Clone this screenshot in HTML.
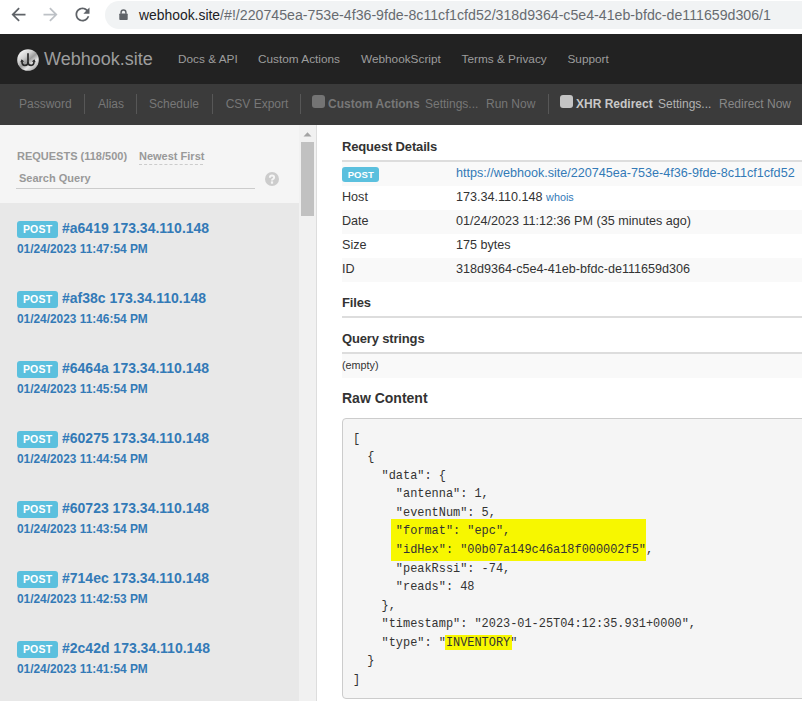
<!DOCTYPE html>
<html><head><meta charset="utf-8">
<style>
*{box-sizing:border-box;margin:0;padding:0}
html,body{width:802px;height:701px;overflow:hidden;background:#fff;font-family:"Liberation Sans",sans-serif;position:relative}
.a{position:absolute;white-space:pre;line-height:1}
#chrome{position:absolute;left:0;top:0;width:802px;height:34px;background:#fff}
#pill{position:absolute;left:105px;top:1px;width:720px;height:28px;border-radius:14px;background:#f1f3f4}
#nav{position:absolute;left:0;top:34px;width:802px;height:50px;background:#222}
#sub{position:absolute;left:0;top:84px;width:802px;height:41px;background:#3b3b3b}
.nv{color:#9d9d9d;font-size:11.8px}
.sb{color:#777;font-size:12px}
.sep{position:absolute;top:94px;width:1px;height:20px;background:#575757}
.cb{position:absolute;width:13px;height:13px;border-radius:2px}
#left{position:absolute;left:0;top:125px;width:299px;height:576px;background:#e8e8e8}
#lefttop{position:absolute;left:0;top:125px;width:299px;height:78px;background:#f5f5f5}
#track{position:absolute;left:299px;top:125px;width:17px;height:576px;background:#f1f1f1}
#trackb{position:absolute;left:316px;top:125px;width:1px;height:576px;background:#ddd}
#thumb{position:absolute;left:301px;top:142px;width:13px;height:74px;background:#c1c1c1}
.lh{color:#999;font-weight:bold;font-size:11px}
.badge{position:absolute;background:#5bc0de;color:#fff;font-weight:bold;border-radius:3px;text-align:center}
.it{color:#337ab7;font-weight:bold}
.row{position:absolute;left:342px;width:460px;height:24px}
.alt{background:#f9f9f9}
.td{color:#333;font-size:12.6px}
.hd{color:#333;font-weight:bold;font-size:13px;letter-spacing:-0.16px}
.bord{position:absolute;left:342px;width:460px;height:2px;background:#ddd}
#code{position:absolute;left:342px;top:418px;width:480px;height:281px;background:#f5f5f5;border:1px solid #ccc;border-radius:4px}
#pre{position:absolute;left:353px;top:429.6px;font-family:"Liberation Mono",monospace;font-size:11.92px;line-height:18.57px;color:#333;white-space:pre}
.hl{position:absolute;background:#f7f700}
</style></head><body>
<div id="chrome"></div>
<!-- back arrow -->
<svg class="a" style="left:7.6px;top:4.1px" width="21" height="21" viewBox="0 0 24 24"><path d="M20 11H7.83l5.59-5.59L12 4l-8 8 8 8 1.41-1.41L7.83 13H20v-2z" fill="#5f6368"/></svg>
<svg class="a" style="left:40.1px;top:4.1px" width="21" height="21" viewBox="0 0 24 24"><path d="M12 4l-1.41 1.41L16.17 11H4v2h12.17l-5.58 5.59L12 20l8-8z" fill="#bdc1c6"/></svg>
<svg class="a" style="left:72.2px;top:4.2px" width="21" height="21" viewBox="0 0 24 24"><path d="M17.65 6.35C16.2 4.9 14.21 4 12 4c-4.42 0-7.99 3.58-7.99 8s3.57 8 7.99 8c3.730 0 6.84-2.55 7.73-6h-2.080c-.82 2.33-3.04 4-5.65 4-3.31 0-6-2.69-6-6s2.69-6 6-6c1.66 0 3.14.69 4.22 1.78L13 11h7V4l-2.35 2.35z" fill="#5f6368"/></svg>
<div id="pill"></div>
<svg class="a" style="left:118.5px;top:9px" width="9" height="11" viewBox="0 0 9 11"><path d="M2.1 4.8V3.3a2.4 2.4 0 0 1 4.8 0v1.5" fill="none" stroke="#5f6368" stroke-width="1.5"/><rect x="0.3" y="4.5" width="8.4" height="6.5" rx="0.8" fill="#5f6368"/></svg>
<div class="a" style="left:139px;top:7.8px;font-size:13.9px;color:#202124">webhook.site<span style="color:#676b70;font-size:14.18px">/#!/220745ea-753e-4f36-9fde-8c11cf1cfd52/318d9364-c5e4-41eb-bfdc-de111659d306/1</span></div>

<div id="nav"></div>
<svg class="a" style="left:17px;top:49px" width="22" height="22" viewBox="0 0 22 22">
<defs><linearGradient id="g1" x1="0.15" y1="0.1" x2="0.85" y2="0.95"><stop offset="0" stop-color="#f4f4f4"/><stop offset="0.3" stop-color="#d0d0d0"/><stop offset="0.5" stop-color="#9c9c9c"/><stop offset="0.72" stop-color="#e6e6e6"/><stop offset="1" stop-color="#a0a0a0"/></linearGradient></defs>
<circle cx="11" cy="11" r="10.8" fill="url(#g1)"/>
<path d="M11 4.3V13.2Q11 16.3 7.8 16.3Q5 16.3 5 12.6" fill="none" stroke="#2a2a2a" stroke-width="1.7"/>
<path d="M11 13.2Q11 16.3 14.2 16.3Q17 16.3 17 12.6" fill="none" stroke="#2a2a2a" stroke-width="1.7"/>
<path d="M3.3 13.2L4.6 10.2L7.2 12.6z M18.7 13.2L17.4 10.2L14.8 12.6z" fill="#2a2a2a"/>
</svg>
<div class="a" style="left:44px;top:50px;font-size:18px;color:#9d9d9d">Webhook.site</div>
<div class="a nv" style="margin-top:0.7px;left:178px;top:53px">Docs &amp; API</div>
<div class="a nv" style="margin-top:0.7px;left:258px;top:53px">Custom Actions</div>
<div class="a nv" style="margin-top:0.7px;left:361px;top:53px">WebhookScript</div>
<div class="a nv" style="margin-top:0.7px;left:461.5px;top:53px">Terms &amp; Privacy</div>
<div class="a nv" style="margin-top:0.7px;left:567.5px;top:53px">Support</div>

<div id="sub"></div>
<div class="a sb" style="left:19px;top:98px">Password</div>
<div class="sep" style="left:84px"></div>
<div class="a sb" style="left:98px;top:98px">Alias</div>
<div class="sep" style="left:136px"></div>
<div class="a sb" style="left:149px;top:98px">Schedule</div>
<div class="sep" style="left:212px"></div>
<div class="a sb" style="left:225.7px;top:98px">CSV Export</div>
<div class="sep" style="left:300px"></div>
<div class="cb" style="left:312px;top:95px;background:#747474;border-radius:3px"></div>
<div class="a sb" style="left:328px;top:98px;font-weight:bold">Custom Actions</div>
<div class="a sb" style="left:425px;top:98px">Settings...</div>
<div class="a sb" style="left:486px;top:98px">Run Now</div>
<div class="sep" style="left:548px"></div>
<div class="cb" style="left:560px;top:95px;background:#c4c4c4;border-radius:3px"></div>
<div class="a sb" style="left:576px;top:98px;font-weight:bold;color:#c8c8c8">XHR Redirect</div>
<div class="a sb" style="left:658px;top:98px;color:#b2b2b2">Settings...</div>
<div class="a sb" style="left:719px;top:98px;color:#888">Redirect Now</div>

<div id="left"></div>
<div id="lefttop"></div>
<div class="a lh" style="left:17px;top:151px">REQUESTS (118/500)</div>
<div class="a lh" style="left:139px;top:151px">Newest First</div>
<div class="a" style="left:139px;top:164px;width:64px;height:1px;border-top:1px dashed #ccc"></div>
<div class="a lh" style="left:19px;top:173px">Search Query</div>
<div class="a" style="left:16px;top:188px;width:239px;height:1px;background:#ccc"></div>
<svg class="a" style="left:265px;top:172px" width="14" height="14" viewBox="0 0 14 14"><circle cx="7" cy="7" r="7" fill="#ccc"/><path d="M4.9 5.7Q4.9 3.6 7 3.6Q9.1 3.6 9.1 5.4Q9.1 6.6 7.9 7.1Q7 7.5 7 8.6" fill="none" stroke="#f5f5f5" stroke-width="2"/><rect x="5.9" y="9.4" width="2.2" height="2.3" fill="#f5f5f5"/></svg>
<div id="track"></div>
<div id="trackb"></div>
<svg class="a" style="left:303px;top:131px" width="9" height="6" viewBox="0 0 9 6"><path d="M0.5 5.5L4.5 1.2 8.5 5.5z" fill="#a3a3a3"/></svg>
<div id="thumb"></div>

<div class="badge" style="left:17px;top:221px;width:41px;height:17px;font-size:10.5px;line-height:17px;letter-spacing:0.2px;padding-left:0.2px">POST</div>
<div class="a it" style="left:62px;top:221px;font-size:14px">#a6419 173.34.110.148</div>
<div class="a it" style="left:17px;top:244.2px;font-size:11.88px">01/24/2023 11:47:54 PM</div>
<div class="badge" style="left:17px;top:291px;width:41px;height:17px;font-size:10.5px;line-height:17px;letter-spacing:0.2px;padding-left:0.2px">POST</div>
<div class="a it" style="left:62px;top:291px;font-size:14px">#af38c 173.34.110.148</div>
<div class="a it" style="left:17px;top:314.2px;font-size:11.88px">01/24/2023 11:46:54 PM</div>
<div class="badge" style="left:17px;top:361px;width:41px;height:17px;font-size:10.5px;line-height:17px;letter-spacing:0.2px;padding-left:0.2px">POST</div>
<div class="a it" style="left:62px;top:361px;font-size:14px">#6464a 173.34.110.148</div>
<div class="a it" style="left:17px;top:384.2px;font-size:11.88px">01/24/2023 11:45:54 PM</div>
<div class="badge" style="left:17px;top:431px;width:41px;height:17px;font-size:10.5px;line-height:17px;letter-spacing:0.2px;padding-left:0.2px">POST</div>
<div class="a it" style="left:62px;top:431px;font-size:14px">#60275 173.34.110.148</div>
<div class="a it" style="left:17px;top:454.2px;font-size:11.88px">01/24/2023 11:44:54 PM</div>
<div class="badge" style="left:17px;top:501px;width:41px;height:17px;font-size:10.5px;line-height:17px;letter-spacing:0.2px;padding-left:0.2px">POST</div>
<div class="a it" style="left:62px;top:501px;font-size:14px">#60723 173.34.110.148</div>
<div class="a it" style="left:17px;top:524.2px;font-size:11.88px">01/24/2023 11:43:54 PM</div>
<div class="badge" style="left:17px;top:571px;width:41px;height:17px;font-size:10.5px;line-height:17px;letter-spacing:0.2px;padding-left:0.2px">POST</div>
<div class="a it" style="left:62px;top:571px;font-size:14px">#714ec 173.34.110.148</div>
<div class="a it" style="left:17px;top:594.2px;font-size:11.88px">01/24/2023 11:42:53 PM</div>
<div class="badge" style="left:17px;top:641px;width:41px;height:17px;font-size:10.5px;line-height:17px;letter-spacing:0.2px;padding-left:0.2px">POST</div>
<div class="a it" style="left:62px;top:641px;font-size:14px">#2c42d 173.34.110.148</div>
<div class="a it" style="left:17px;top:664.2px;font-size:11.88px">01/24/2023 11:41:54 PM</div>
<div class="badge" style="left:17px;top:711px;width:41px;height:17px;font-size:10.5px;line-height:17px;letter-spacing:0.2px;padding-left:0.2px">POST</div>
<div class="a it" style="left:62px;top:711px;font-size:14px">#xxxxx 173.34.110.148</div>
<div class="a it" style="left:17px;top:734.2px;font-size:11.88px">01/24/2023 11:40:54 PM</div>

<!-- right -->
<div class="a hd" style="left:342px;top:140.2px">Request Details</div>
<div class="bord" style="top:160px"></div>
<div class="row alt" style="top:162px"></div>
<div class="badge" style="left:342px;top:167px;width:37px;height:15px;font-size:9.5px;line-height:15px;letter-spacing:0.1px;padding-left:0.6px">POST</div>
<div class="a td" style="left:456px;top:167px;color:#337ab7">https://webhook.site/220745ea-753e-4f36-9fde-8c11cf1cfd52</div>
<div class="row" style="top:186px"></div>
<div class="a td" style="left:342px;top:191px">Host</div>
<div class="a td" style="left:456px;top:191px">173.34.110.148 <span style="color:#337ab7;font-size:10.8px">whois</span></div>
<div class="row alt" style="top:210px"></div>
<div class="a td" style="left:342px;top:215px">Date</div>
<div class="a td" style="left:456px;top:215px">01/24/2023 11:12:36 PM (35 minutes ago)</div>
<div class="row" style="top:234px"></div>
<div class="a td" style="left:342px;top:239px">Size</div>
<div class="a td" style="left:456px;top:239px">175 bytes</div>
<div class="row alt" style="top:258px"></div>
<div class="a td" style="left:342px;top:263px">ID</div>
<div class="a td" style="left:456px;top:263px">318d9364-c5e4-41eb-bfdc-de111659d306</div>

<div class="a hd" style="left:342px;top:295.8px">Files</div>
<div class="bord" style="top:316px"></div>
<div class="a hd" style="left:342px;top:331.8px">Query strings</div>
<div class="bord" style="top:352px"></div>
<div class="row alt" style="top:354px"></div>
<div class="a td" style="left:342px;top:360px;font-size:10.8px">(empty)</div>
<div class="a hd" style="left:342px;top:391.4px;font-size:14px;letter-spacing:0">Raw Content</div>

<div id="code"></div>
<div class="hl" style="left:391px;top:519px;width:255px;height:41.5px"></div>
<div class="hl" style="left:445px;top:635px;width:67px;height:15px"></div>
<div id="pre">[
  {
    "data": {
      "antenna": 1,
      "eventNum": 5,
      "format": "epc",
      "idHex": "00b07a149c46a18f000002f5",
      "peakRssi": -74,
      "reads": 48
    },
    "timestamp": "2023-01-25T04:12:35.931+0000",
    "type": "INVENTORY"
  }
]</div>
</body></html>
